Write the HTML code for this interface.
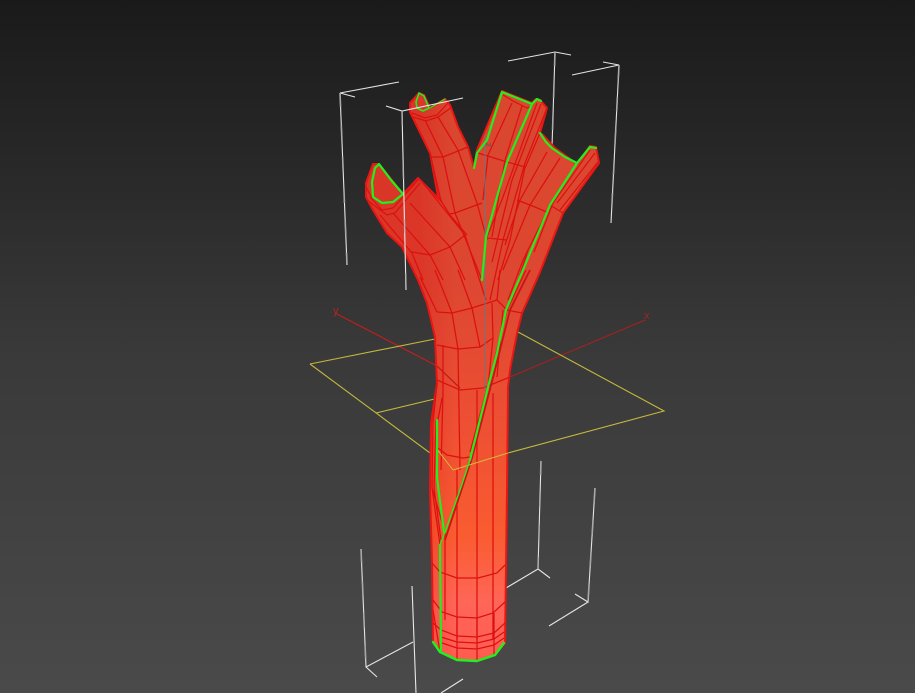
<!DOCTYPE html>
<html><head><meta charset="utf-8"><style>
html,body{margin:0;padding:0;background:#333;width:915px;height:693px;overflow:hidden}
svg{display:block}
</style></head><body>
<svg width="915" height="693" viewBox="0 0 915 693" xmlns="http://www.w3.org/2000/svg">
<defs>
<linearGradient id="bg" x1="0" y1="0" x2="0" y2="1">
<stop offset="0" stop-color="#1a1a1a"/><stop offset=".25" stop-color="#292929"/><stop offset=".5" stop-color="#393939"/><stop offset="1" stop-color="#4a4a4a"/>
</linearGradient>
<linearGradient id="f" gradientUnits="userSpaceOnUse" x1="0" y1="90" x2="0" y2="660">
<stop offset="0" stop-color="#d9472f"/><stop offset=".35" stop-color="#de4731"/><stop offset=".6" stop-color="#ee5033"/><stop offset=".78" stop-color="#f95c30"/><stop offset=".9" stop-color="#ff6657"/><stop offset="1" stop-color="#ff5c50"/>
</linearGradient>
<linearGradient id="s" gradientUnits="userSpaceOnUse" x1="420" y1="0" x2="455" y2="0">
<stop offset="0" stop-color="#d81818" stop-opacity=".35"/><stop offset="1" stop-color="#d81818" stop-opacity="0"/>
</linearGradient>
</defs>
<rect width="915" height="693" fill="url(#bg)"/>

<!-- brackets behind the tree -->
<g fill="none" stroke="#e4e4e4" stroke-width="1.1">
<path d="M399,82L340,93L355,97M340,93L347,265"/>
<path d="M508,61L555,52L571,55M555,52L552,147"/>
<path d="M572,75L619,65L603,62M619,65L611,223"/>
<path d="M361,549L366,667L377,677M366,667L413,642"/>
<path d="M541,461L538,569L550,578M538,569L506,588"/>
<path d="M595,488L588,602L575,594M588,602L549,626"/>
</g>
<g fill="none" stroke="#a8a8a8" stroke-width="1.6" stroke-dasharray="14 18">
<path d="M340,93L347,265"/><path d="M555,52L552,147"/><path d="M619,65L611,223"/><path d="M361,549L366,667"/><path d="M541,461L538,569"/><path d="M595,488L588,602"/>
</g>

<!-- axes & grid behind tree -->
<g fill="none" stroke-width="1.1">
<path d="M335,313L437,366" stroke="#c81c1c"/>
<path d="M645,320L510,377" stroke="#a82020"/>
<path d="M310,364L435,339M518,332L664,411L508,453M310,364L453,470M376,413L443,397" stroke="#c4b83c"/>
</g>
<text x="333" y="314" font-family="Liberation Sans,sans-serif" font-size="11" fill="#b02525">y</text>
<text x="644" y="319" font-family="Liberation Sans,sans-serif" font-size="11" fill="#a02525">x</text>

<!-- tree silhouette -->
<path d="M433,642L432,563L430,490L431,423L437,383L435,337L427,303L418,280L402,247L387,233L373,210L366,197L366,183L373,164L379,164L403,194L418,178L423,183L441,201L438,197L430,153L410,112L410,103L419,93L424,95L430,108L445,99L450,105L458,127L468,147L474,168L477,150L502,91L532,103L536,99L540,100L547,108L540,133L543,135L555,148L577,164L590,146L596,147L599,163L563,213L540,272L522,313L517,333L510,370L508,387L507,490L505,643L495,655L477,661L457,660L440,652Z" fill="url(#f)" stroke="#ea1614" stroke-width="2" stroke-linejoin="round"/>
<path d="M433,642L432,563L430,490L431,423L437,383L435,337L427,303L418,280L402,247L387,233L373,210L366,197L366,183L373,164L379,164L403,194L418,178L423,183L441,201L438,197L430,153L410,112L410,103L419,93L424,95L430,108L445,99L450,105L458,127L468,147L474,168L470,300L470,660L457,660L440,652Z" fill="url(#s)"/>

<!-- wireframe -->
<g fill="none" stroke="#dc1010" stroke-width="1.25">
<!-- left branch -->
<path d="M367,200L387,215L395,213L420,183M370,197L382,210L393,208L418,180M366,187L373,200"/>
<path d="M412,252L430,255L450,247L465,235"/>
<path d="M393,213L430,255L443,280M410,203L450,247L465,280M380,215L412,253L423,280"/>
<path d="M423,183L465,235L486,300"/>
<!-- middle branch -->
<path d="M412,113L425,118L437,115L448,103M413,117L426,121L438,117L452,107"/>
<path d="M430,157L443,157L468,147"/>
<path d="M425,120L443,157L455,213L482,280M438,117L458,150L477,203L487,240"/>
<path d="M450,214L455,213L482,203M430,153L441,201L450,215L467,235"/>
<!-- front right -->
<path d="M503,95L513,101L527,108L530,107M478,153L507,162L525,167"/>
<path d="M512,103L488,155L483,200M522,106L505,160L492,237"/>
<path d="M487,238L507,240M525,167L510,240L498,280M537,103L503,197L487,237M547,108L525,163L503,240L490,300M541,104L512,180L492,262"/>
<!-- back right -->
<path d="M517,200L530,205L547,212M547,152L520,200L505,245M560,158L530,205L503,270"/>
<path d="M595,153L557,203M598,162L560,210M590,150L553,203L534,252M547,212L523,260L508,300M550,205L563,213"/>
<path d="M540,133L525,168M528,250L512,300"/>
<!-- trunk upper -->
<path d="M437,312L452,313L472,308L497,300L500,270M507,310L522,313M497,300L507,310"/>
<path d="M435,270L452,313M458,270L472,308M420,277L437,312"/>
<path d="M437,345L458,349L480,347L493,338"/>
<path d="M452,313L458,349L460,470M472,308L480,347M492,303L493,338L488,387M503,310L497,377"/>
<path d="M443,345L443,390L441,470M477,390L477,640M493,393L493,640"/>
<path d="M437,380L460,390L483,388L510,377"/>
<path d="M437,366L460,388" stroke="#c01c1c"/>
<path d="M438,448L447,455L463,458L470,457"/>
<!-- double lines along seam -->
<path d="M530,270L510,310L495,370L472,458L445,540" stroke="#c81414" stroke-width="1.8"/>
<path d="M526,270L507,310L492,370L470,452"/>
<!-- flap -->
<path d="M437,383L433,423L432,488L440,545M436,420L434,488L441,540M442,398L437,425M432,488L445,532"/>
<path d="M457,470L457,640M445,532L445,620"/>
<!-- rings bottom -->
<path d="M432,563L440,572L457,578L478,578L497,573L505,565"/>
<path d="M433,600L442,612L457,617L477,618L493,613L505,602"/>
<path d="M433,623L441,630L457,636L477,637L494,633L505,623"/>
<path d="M441,637L457,642L477,643L494,639L504,632"/>
<path d="M442,643L457,648L477,649L494,645L504,638"/>
<path d="M457,617L457,660M477,618L477,661M494,613L494,656M433,610L440,652"/>
</g>

<!-- grey z axis -->
<path d="M485,135L485,390" stroke="#70757a" stroke-width="1" fill="none"/>
<text x="-147" y="491" transform="rotate(-90)" font-family="Liberation Sans,sans-serif" font-size="9" fill="#555a62">z</text>

<!-- yellow on top -->
<path d="M453,470L508,453M436,448L453,470" stroke="#d6b83a" stroke-width="1" fill="none"/>

<!-- green selection -->
<g fill="none" stroke="#1ff01f" stroke-width="2.2" stroke-linejoin="round" stroke-linecap="round">
<path d="M379,164L391,180L403,194L393,202L382,203L373,197L372,182L375,168Z"/>
<path d="M419,93L424,96L429,108L423,111L417,108L416,102Z" stroke-width="1.6"/>
<path d="M430,108L445,99" stroke-width="1.2"/>
<path d="M474,168L477,153L487,140L502,92L517,98L532,104L537,99L541,101"/>
<path d="M532,104L507,162L497,197L486,237L482,280"/>
<path d="M540,133L546,142L552,148L565,157L577,163L590,147L596,148"/>
<path d="M577,163L550,205L530,253L523,270L506,310L497,353L488,387L470,460"/>
<path d="M470,460L460,490L445,532L440,545" stroke-width="1.4"/>
<path d="M440,545L441,650"/>
<path d="M437,420L437,478L444,532"/>
<path d="M433,642L440,652L457,660L477,661L495,655L504,643" stroke-width="2.4"/>
</g>

<!-- brackets in front -->
<g fill="none" stroke="#e8e8e8" stroke-width="1.1">
<path d="M386,106L402,111L463,98M402,111L406,290"/>
<path d="M412,586L416,693M463,679L441,693"/>
</g>
<path d="M402,111L406,290" stroke="#b4b4b4" stroke-width="1.4" stroke-dasharray="14 40" fill="none"/>
</svg>
</body></html>
